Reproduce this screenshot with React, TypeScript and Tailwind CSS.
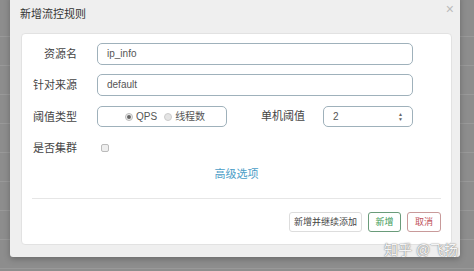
const font = { fontFamily: '"Liberation Sans", "Noto Sans CJK SC", sans-serif' };

function Label({ children }: { children: React.ReactNode }) {
    return <div className="w-[55px] shrink-0 whitespace-nowrap text-right text-[11px] leading-[12px] text-[#444]">{children}</div>;
}

const box = 'flex items-center rounded-[5px] border border-[#9fb1bb] px-[9px] text-[10px] leading-none text-[#555]';

export default function App() {
    return (
        <div className="relative h-[271px] w-[474px] overflow-hidden bg-[#8d8d8d]" style={font}>
            {/* table rows behind the modal */}
            <div className="flex flex-col pt-[8px]">
                {[0, 1, 2, 3, 4, 5, 6, 7, 8].map((i) => (
                    <div key={i} className="h-[29px] border-b border-[#999]" />
                ))}
            </div>

            {/* Modal */}
            <div className="absolute left-[10px] top-[-6px] h-[263px] w-[450px] rounded-[3px] bg-[#efefef] shadow-[0_2px_6px_rgba(0,0,0,0.25)]">
                <span className="absolute right-[6px] top-[8px] text-[14px] leading-none text-[#bbb]">×</span>
                <div className="flex h-[39px] items-center pl-[10px] pt-[1px]">
                    <span className="text-[11px] leading-none text-[#333]">新增流控规则</span>
                </div>

                <div className="ml-[11px] mr-[8px] flex h-[212px] flex-col rounded-[4px] border border-[#e2e2e2] bg-white">
                    <div className="flex flex-col gap-[9px] pr-[38px] pt-[9px]">
                        <div className="flex items-center gap-[20px]">
                            <Label>资源名</Label>
                            <div className={`${box} h-[22px] flex-1`}>ip_info</div>
                        </div>
                        <div className="flex items-center gap-[20px]">
                            <Label>针对来源</Label>
                            <div className={`${box} h-[22px] flex-1`}>default</div>
                        </div>
                        <div className="mt-[1px] flex items-center">
                            <Label>阈值类型</Label>
                            <div className={`${box} ml-[20px] h-[21px] w-[130px] pl-[27px]`}>
                                <span className="flex h-[8px] w-[8px] items-center justify-center rounded-full border border-[#bbb] bg-[#eee]">
                                    <span className="h-[4px] w-[4px] rounded-full bg-[#666]" />
                                </span>
                                <span className="ml-[3px] text-[10px]">QPS</span>
                                <span className="ml-[7px] h-[8px] w-[8px] rounded-full border border-[#ccc] bg-[#e4e4e4]" />
                                <span className="ml-[3px] whitespace-nowrap text-[10px]">线程数</span>
                            </div>
                            <span className="ml-[34px] whitespace-nowrap text-[11px] leading-none text-[#444]">单机阈值</span>
                            <div className={`${box} ml-[18px] h-[21px] flex-1 justify-between`}>
                                <span>2</span>
                                <span className="flex flex-col items-center text-[5px] leading-[5px] text-[#666]">
                                    <span>▲</span>
                                    <span>▼</span>
                                </span>
                            </div>
                        </div>
                    </div>

                    <div className="mt-[15px] flex h-[12px] items-center">
                        <Label>是否集群</Label>
                        <span className="ml-[24px] h-[8px] w-[8px] rounded-[2px] border border-[#bbb] bg-[#eee]" />
                    </div>

                    <div className="mt-[13px] h-[14px] text-center text-[11px] leading-[14px] text-[#4b9dc7]">高级选项</div>

                    <div className="mx-[10px] mt-[17px] border-t border-[#e6e6e6]" />

                    <div className="mt-[13px] flex justify-end gap-[6px] pr-[10px] text-[9px] leading-none">
                        <span className="flex h-[20px] w-[73px] items-center justify-center whitespace-nowrap rounded-[3px] border border-[#ddd] text-[#444]">
                            新增并继续添加
                        </span>
                        <span className="flex h-[20px] w-[33px] items-center justify-center rounded-[3px] border border-[#6a9b7a] text-[#3d9a55]">
                            新增
                        </span>
                        <span className="flex h-[20px] w-[34px] items-center justify-center rounded-[3px] border border-[#c89a9a] text-[#c0505a]">
                            取消
                        </span>
                    </div>
                </div>
            </div>

            {/* watermark */}
            <div className="absolute left-[384px] top-[243px] whitespace-nowrap text-[14px] leading-none text-[#f4f4f4] [text-shadow:0_0_1px_#777,0_0_2px_#999]">
                知乎 @飞扬
            </div>
        </div>
    );
}
